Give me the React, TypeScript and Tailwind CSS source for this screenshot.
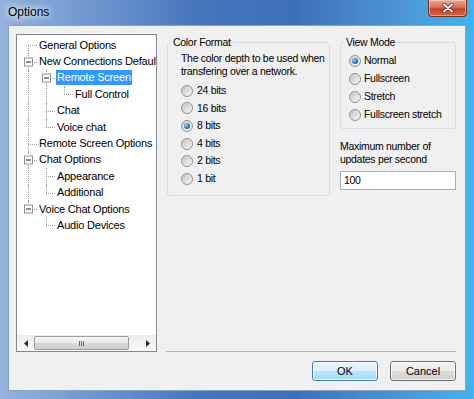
import React from 'react';

type Cell = 'line' | 'tee' | 'elbow' | 'first' | 'blank';

interface TreeRow {
  label: string;
  cells: Cell[];
  box?: boolean;
  selected?: boolean;
}

const treeRows: TreeRow[] = [
  { label: 'General Options', cells: ['first'] },
  { label: 'New Connections Defaults', cells: ['tee'], box: true },
  { label: 'Remote Screen', cells: ['line', 'tee'], box: true, selected: true },
  { label: 'Full Control', cells: ['line', 'line', 'elbow'] },
  { label: 'Chat', cells: ['line', 'tee'] },
  { label: 'Voice chat', cells: ['line', 'elbow'] },
  { label: 'Remote Screen Options', cells: ['tee'] },
  { label: 'Chat Options', cells: ['tee'], box: true },
  { label: 'Appearance', cells: ['line', 'tee'] },
  { label: 'Additional', cells: ['line', 'elbow'] },
  { label: 'Voice Chat Options', cells: ['elbow'], box: true },
  { label: 'Audio Devices', cells: ['blank', 'elbow'] },
];

const colorDepths = ['24 bits', '16 bits', '8 bits', '4 bits', '2 bits', '1 bit'];
const viewModes = ['Normal', 'Fullscreen', 'Stretch', 'Fullscreen stretch'];

function TreeCell({ kind, box }: { kind: Cell; box?: boolean }) {
  const dots = 'absolute border-dotted border-[#a0a0a0]';
  return (
    <div className="relative w-[18px] h-full shrink-0">
      {(kind === 'line' || kind === 'tee') && <span className={`${dots} left-[9px] top-0 bottom-0 border-l`} />}
      {kind === 'elbow' && <span className={`${dots} left-[9px] top-0 h-1/2 border-l`} />}
      {kind === 'first' && <span className={`${dots} left-[9px] top-1/2 bottom-0 border-l`} />}
      {kind !== 'line' && kind !== 'blank' && <span className={`${dots} left-[9px] right-0 top-1/2 border-t`} />}
      {box && (
        <span className="absolute left-[5px] top-1/2 -translate-y-1/2 w-[9px] h-[9px] border border-[#919191] bg-white flex items-center justify-center">
          <span className="w-[5px] h-px bg-[#1a1a1a]" />
        </span>
      )}
    </div>
  );
}

function ScrollArrow({ dir }: { dir: 'left' | 'right' }) {
  return (
    <div className="w-[17px] h-full flex items-center justify-center shrink-0">
      <svg width="4" height="7" viewBox="0 0 4 7">
        <polygon points={dir === 'left' ? '4,0 0,3.5 4,7' : '0,0 4,3.5 0,7'} fill="#2b2b2b" />
      </svg>
    </div>
  );
}

function Tree() {
  return (
    <div className="w-[141px] h-[318px] shrink-0 bg-white border border-[#828790] flex flex-col">
      <div className="flex-1 overflow-hidden pt-[2px] pl-[2px] text-[11px] tracking-[-0.2px]">
        {treeRows.map((row) => (
          <div key={row.label} className="h-[16.4px] flex items-center whitespace-nowrap">
            {row.cells.map((c, i) => (
              <TreeCell key={i} kind={c} box={row.box && i === row.cells.length - 1} />
            ))}
            <span
              className={`ml-px px-[1px] leading-[15px] ${
                row.selected ? 'bg-[#3399ff] text-white' : 'text-black'
              }`}
            >
              {row.label}
            </span>
          </div>
        ))}
      </div>
      <div className="h-[16px] flex items-center bg-[linear-gradient(to_bottom,#ececec,#f8f8f8)]">
        <ScrollArrow dir="left" />
        <div className="w-[95px] h-[14px] rounded-[2px] border border-[#9b9b9b] bg-[linear-gradient(to_bottom,#f7f7f7,#e8e8e8_50%,#d8d8d8_50%,#d0d0d0)] flex items-center justify-center gap-[1px]">
          <span className="w-px h-[5px] bg-[#6a6a6a]" />
          <span className="w-px h-[5px] bg-[#6a6a6a]" />
          <span className="w-px h-[5px] bg-[#6a6a6a]" />
        </div>
        <div className="flex-1" />
        <ScrollArrow dir="right" />
      </div>
    </div>
  );
}

function Radio({ checked }: { checked?: boolean }) {
  return (
    <span className="w-[12px] h-[12px] rounded-full border border-[#8e8f8f] bg-[linear-gradient(135deg,#d0d0d0,#f7f7f7)] flex items-center justify-center shrink-0">
      {checked ? (
        <span className="w-[6px] h-[6px] rounded-full bg-[radial-gradient(circle_at_35%_35%,#9ad8f7,#2a78b8_55%,#0e3f6e)]" />
      ) : (
        <span className="w-[8px] h-[8px] rounded-full bg-[linear-gradient(135deg,#c6c6c6,#f4f4f4)]" />
      )}
    </span>
  );
}

function WinButton({ label, isDefault }: { label: string; isDefault?: boolean }) {
  return (
    <button
      className={`w-[66px] h-[20px] rounded-[3px] border text-[11px] leading-none text-black shadow-[inset_0_0_0_1px_rgba(255,255,255,0.75)] ${
        isDefault
          ? 'border-[#3c7fb1] bg-[linear-gradient(to_bottom,#eaf6fd_0%,#d9f0fc_50%,#bee6fd_50%,#a7d9f5_100%)]'
          : 'border-[#707070] bg-[linear-gradient(to_bottom,#f2f2f2_0%,#ebebeb_50%,#dddddd_50%,#cfcfcf_100%)]'
      }`}
    >
      {label}
    </button>
  );
}

export default function App() {
  return (
    <div className="w-[474px] h-[399px] flex flex-col px-[8px] pb-[8px] overflow-hidden font-['Liberation_Sans',Arial,sans-serif] text-black bg-[linear-gradient(to_right,#93b2dc,#7199d1_18%,#4675bb_42%,#3e70ba_62%,#4d96d6_85%,#3fb4ec)]">
      <div className="h-[25px] shrink-0 flex items-start justify-between">
        <span className="mt-[4px] text-[12px] leading-[16px] [text-shadow:0_0_6px_#fff,0_0_10px_#fff]">Options</span>
        <div className="-mr-[1px] w-[39px] h-[17px] rounded-b-[4px] border border-t-0 border-[#7a2f22] bg-[linear-gradient(to_bottom,#e9a896,#d77058_45%,#c6432c_55%,#d4664c)] shadow-[inset_0_0_0_1px_rgba(255,220,210,0.5)] flex items-center justify-center">
          <svg width="12" height="10" viewBox="0 0 12 10">
            <path d="M2 1.5 L10 8.5 M10 1.5 L2 8.5" stroke="#5a1b12" strokeWidth="3.4" strokeLinecap="round" />
            <path d="M2 1.5 L10 8.5 M10 1.5 L2 8.5" stroke="#ffffff" strokeWidth="2" strokeLinecap="round" />
          </svg>
        </div>
      </div>

      <div className="flex-1 flex bg-[#f0f0f0] border border-[#8aa3c6] pt-[8px] pl-[7px] pr-[9px] pb-[9px]">
        <Tree />

        <div className="ml-[9px] flex-1 flex flex-col justify-between pt-px text-[10.5px] tracking-[-0.3px]">
          <div className="ml-px flex items-start gap-[10px]">
            <fieldset className="w-[163px] h-[161px] border border-[#d5dfe5] rounded-[3px] pl-[13px] pr-[3px]">
              <legend className="ml-[-10px] px-[2px] leading-[14px]">Color Format</legend>
              <p className="mt-[3px] leading-[13px] whitespace-nowrap">
                The color depth to be used when
                <br />
                transfering over a network.
              </p>
              <div className="mt-[4px]">
                {colorDepths.map((d) => (
                  <label key={d} className="h-[17.6px] flex items-center gap-[4px]">
                    <Radio checked={d === '8 bits'} />
                    <span>{d}</span>
                  </label>
                ))}
              </div>
            </fieldset>

            <div className="w-[116px] flex flex-col">
              <fieldset className="h-[94px] border border-[#d5dfe5] rounded-[3px] px-[8px] pt-[3px]">
                <legend className="ml-[-5px] px-[2px] leading-[14px]">View Mode</legend>
                {viewModes.map((m) => (
                  <label key={m} className="h-[18px] flex items-center gap-[3px] whitespace-nowrap">
                    <Radio checked={m === 'Normal'} />
                    <span>{m}</span>
                  </label>
                ))}
              </fieldset>
              <p className="mt-[11px] leading-[13px]">
                Maximum number of
                <br />
                updates per second
              </p>
              <div className="mt-[5px] h-[19px] border border-[#abadb3] bg-white flex items-center px-[3px]">100</div>
            </div>
          </div>

          <div>
            <div className="h-px bg-[#b4b4b4]" />
            <div className="mt-[9px] flex justify-end gap-[12px] tracking-normal">
              <WinButton label="OK" isDefault />
              <WinButton label="Cancel" />
            </div>
          </div>
        </div>
      </div>
    </div>
  );
}
